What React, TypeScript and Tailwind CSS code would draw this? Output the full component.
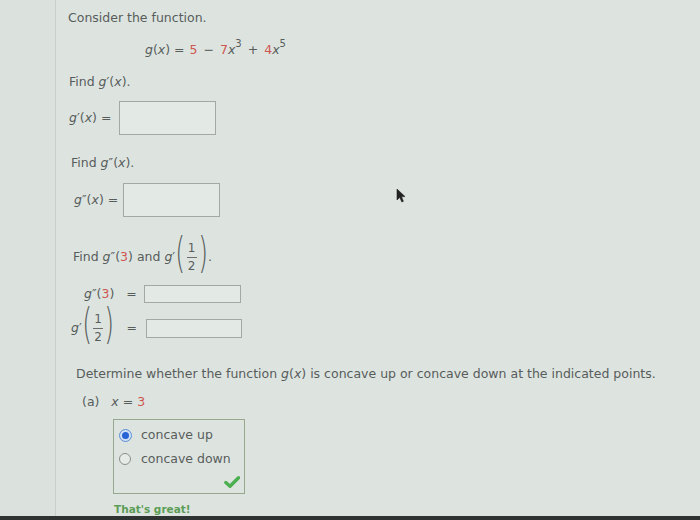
import React from "react";

const red = "text-[#cf5650]";

function Frac() {
  return (
    <span className="inline-flex items-center">
      <span className="text-[42px] leading-none font-light scale-x-[0.6] inline-block -translate-y-[3px] -mx-[3px]">(</span>
      <span className="inline-flex flex-col items-center text-[12px] leading-[17px] mx-[1px]">
        <span>1</span>
        <span className="block w-[10px] h-px bg-[#6a6e6c]" />
        <span>2</span>
      </span>
      <span className="text-[42px] leading-none font-light scale-x-[0.6] inline-block -translate-y-[3px] -mx-[3px]">)</span>
    </span>
  );
}

function Box({ w, h }: { w: string; h: string }) {
  return <div className={`${w} ${h} border border-[#a3a8a6] bg-[#e3e9e5]`} />;
}

export default function App() {
  return (
    <div
      className="relative w-[700px] h-[520px] overflow-hidden bg-[#dde4e0] text-[#585c5b] text-[12.5px] flex flex-col"
      style={{ fontFamily: '"DejaVu Sans", Verdana, sans-serif' }}
    >
      <div className="flex flex-1">
        <div className="w-[56px] shrink-0 border-r border-[#c9cfcc] bg-[#dbe2de]" />
        <div className="flex-1 flex flex-col">
          <div className="mt-[8px] ml-[12px] h-[20px] leading-[20px]">Consider the function.</div>

          <div className="mt-[12px] ml-[89px] h-[20px] leading-[20px] flex items-baseline">
            <i>g</i>(<i>x</i>) = <span className={`${red} ml-[5px]`}>5</span>
            <span className="mx-[6px]">−</span>
            <span className={red}>7</span><i>x</i>
            <span className="text-[10px] -ml-[0px] relative -top-[7px]">3</span>
            <span className="mx-[6px]">+</span>
            <span className={red}>4</span><i>x</i>
            <span className="text-[10px] -ml-[0px] relative -top-[7px]">5</span>
          </div>

          <div className="mt-[12px] ml-[13px] h-[20px] leading-[20px]">
            Find <i>g</i>′(<i>x</i>).
          </div>

          <div className="mt-[9px] ml-[13px] flex items-center">
            <span className="w-[50px]"><i>g</i>′(<i>x</i>) =</span>
            <Box w="w-[97px]" h="h-[34px]" />
          </div>

          <div className="mt-[18px] ml-[15px] h-[20px] leading-[20px]">
            Find <i>g</i>″(<i>x</i>).
          </div>

          <div className="mt-[10px] ml-[18px] flex items-center">
            <span className="w-[49px]"><i>g</i>″(<i>x</i>) =</span>
            <Box w="w-[97px]" h="h-[34px]" />
          </div>

          <div className="mt-[21px] ml-[17px] h-[38px] flex items-center">
            <span>Find <i>g</i>″(<span className={red}>3</span>) and <i>g</i>′</span>
            <Frac />
            <span>.</span>
          </div>

          <div className="mt-[9px] ml-[28px] h-[18px] flex items-center">
            <span className="w-[60px]"><i>g</i>″(<span className={red}>3</span>) &nbsp;&nbsp;=</span>
            <Box w="w-[97px]" h="h-[18px]" />
          </div>

          <div className="mt-[6px] ml-[15px] h-[38px] flex items-center">
            <i>g</i>′
            <Frac />
            <span className="ml-[12px] w-[19px]">=</span>
            <Box w="w-[96px]" h="h-[19px]" />
          </div>

          <div className="mt-[17px] ml-[20px] h-[20px] leading-[20px] whitespace-nowrap">
            Determine whether the function <i>g</i>(<i>x</i>) is concave up or concave down at the indicated points.
          </div>

          <div className="mt-[8px] ml-[26px] h-[20px] leading-[20px]">
            (a)&nbsp;&nbsp; <i>x</i> = <span className={red}>3</span>
          </div>

          <div className="mt-[7px] ml-[57px] w-[132px] h-[75px] border border-[#97a88f] flex flex-col relative">
            <div className="mt-[7px] ml-[5px] flex items-center h-[16px]">
              <span className="w-[13px] h-[13px] rounded-full bg-[#cfe0f5] border border-[#5b8fd8] flex items-center justify-center">
                <span className="w-[7px] h-[7px] rounded-full bg-[#2563d6]" />
              </span>
              <span className="ml-[9px]">concave up</span>
            </div>
            <div className="mt-[8px] ml-[5px] flex items-center h-[16px]">
              <span className="w-[12px] h-[12px] rounded-full border border-[#8a8f8d] bg-[#e6ebe8]" />
              <span className="ml-[10px]">concave down</span>
            </div>
            <svg className="absolute right-[4px] bottom-[5px]" width="16" height="12" viewBox="0 0 16 12">
              <path d="M1.8 6.5 L6 10.2 L14.5 1.8" fill="none" stroke="#4caf50" strokeWidth="3.4" strokeLinecap="round" strokeLinejoin="round" />
            </svg>
          </div>

          <div className="mt-[8px] ml-[58px] h-[14px] leading-[14px] text-[10.5px] font-bold text-[#5b9d56]">
            That's great!
          </div>
        </div>
      </div>
      <div className="h-[4px] bg-[#2e3230]" />

      <svg className="absolute left-[396px] top-[188px]" width="10" height="16" viewBox="0 0 10 16">
        <path d="M1 1 L1 12 L3.8 9.4 L5.8 14 L7.4 13.3 L5.5 8.8 L9 8.6 Z" fill="#222" stroke="#222" strokeWidth="0.6" strokeLinejoin="round" />
      </svg>
    </div>
  );
}
